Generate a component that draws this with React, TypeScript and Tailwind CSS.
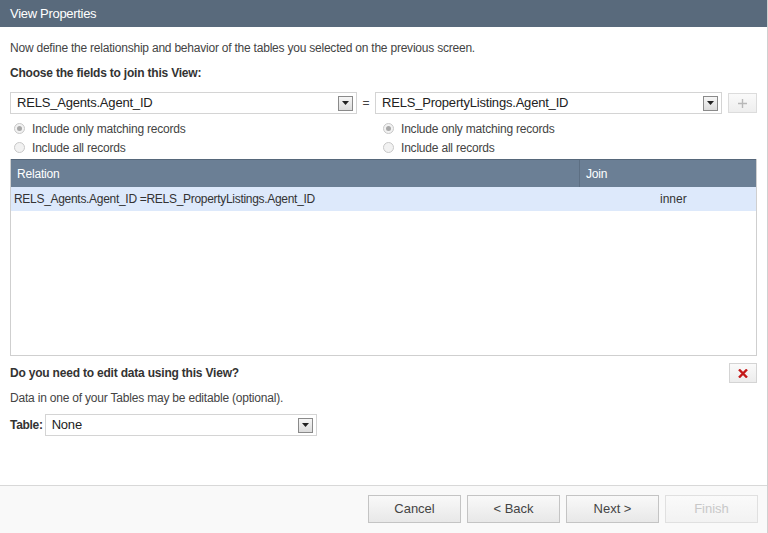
import React from 'react';

function Select({ value, className }: { value: string; className: string }) {
  return (
    <div className={`flex items-center justify-between h-[22px] bg-white border border-[#d4d4d4] pl-[6px] pr-[3px] ${className}`}>
      <span className="text-[13px] text-[#222] tracking-[-0.2px]">{value}</span>
      <div className="w-[15px] h-[15px] border border-[#8a8a8a] bg-gradient-to-b from-[#f6f6f6] to-[#dcdcdc] flex items-center justify-center">
        <svg width="7" height="4" viewBox="0 0 7 4"><path d="M0 0h7L3.5 4z" fill="#222" /></svg>
      </div>
    </div>
  );
}

function Radio({ checked, label }: { checked?: boolean; label: string }) {
  return (
    <div className="flex items-center h-[19px]">
      <div className="w-[11px] h-[11px] rounded-full border border-[#c8c8c8] bg-[#f2f2f2] flex items-center justify-center ml-[4px] mr-[7px]">
        {checked && <div className="w-[5px] h-[5px] rounded-full bg-[#a8a8a8]" />}
      </div>
      <span className="text-[12px] text-[#444] tracking-[-0.2px]">{label}</span>
    </div>
  );
}

function FooterButton({ label, disabled }: { label: string; disabled?: boolean }) {
  return (
    <button
      className={`w-[93px] h-[28px] border text-[13px] bg-gradient-to-b ${
        disabled
          ? 'border-[#e0e0e0] from-[#fafafa] to-[#f2f2f2] text-[#c8c8c8]'
          : 'border-[#c4c4c4] from-[#f9f9f9] to-[#e8e8e8] text-[#444]'
      }`}
    >
      {label}
    </button>
  );
}

export default function App() {
  return (
    <div className="w-[768px] h-[533px] bg-white flex flex-col font-['Liberation_Sans',Arial,sans-serif] border-r border-[#d0d0d0] overflow-hidden">
      <div className="h-[27px] bg-[#596a7c] flex items-center px-[10px] shrink-0">
        <span className="text-white text-[13px] tracking-[-0.3px]">View Properties</span>
      </div>

      <div className="flex-1 px-[10px]">
        <p className="text-[12px] text-[#444] mt-[14px] leading-[14px] tracking-[-0.22px]">
          Now define the relationship and behavior of the tables you selected on the previous screen.
        </p>
        <p className="text-[12px] text-[#333] font-bold mt-[11px] leading-[14px] tracking-[-0.2px]">Choose the fields to join this View:</p>

        <div className="flex items-center mt-[12px]">
          <Select value="RELS_Agents.Agent_ID" className="w-[348px]" />
          <span className="w-[18px] text-center text-[12px] text-[#444]">=</span>
          <Select value="RELS_PropertyListings.Agent_ID" className="w-[348px]" />
          <div className="ml-[6px] w-[29px] h-[20px] border border-[#dcdcdc] bg-gradient-to-b from-[#fafafa] to-[#eeeeee] flex items-center justify-center">
            <svg width="9" height="9" viewBox="0 0 9 9"><path d="M4.5 0v9M0 4.5h9" stroke="#b8b8b8" strokeWidth="1.4" /></svg>
          </div>
        </div>

        <div className="flex mt-[5px]">
          <div className="w-[369px] flex flex-col">
            <Radio checked label="Include only matching records" />
            <Radio label="Include all records" />
          </div>
          <div className="flex flex-col">
            <Radio checked label="Include only matching records" />
            <Radio label="Include all records" />
          </div>
        </div>

        <div className="mt-[2px] w-[747px] h-[197px] border border-[#cfcfcf] border-t-0">
          <div className="flex h-[28px] bg-[#6b7f95] text-[12px] text-white border-t border-[#56677a] tracking-[-0.2px]">
            <div className="w-[569px] flex items-center pl-[6px] border-r border-[#5d6f83]">Relation</div>
            <div className="flex-1 flex items-center pl-[6px]">Join</div>
          </div>
          <div className="flex h-[24px] bg-[#dde9fb] text-[12px] text-[#333] items-center">
            <div className="w-[570px] pl-[3px] tracking-[-0.3px]">RELS_Agents.Agent_ID =RELS_PropertyListings.Agent_ID</div>
            <div className="pl-[79px]">inner</div>
          </div>
        </div>

        <div className="flex items-center justify-between mt-[7px] h-[20px]">
          <p className="text-[12px] text-[#333] font-bold tracking-[-0.2px]">Do you need to edit data using this View?</p>
          <div className="w-[28px] h-[20px] border border-[#d4d4d4] bg-gradient-to-b from-[#fafafa] to-[#ececec] flex items-center justify-center">
            <svg width="10" height="9" viewBox="0 0 10 9"><path d="M1 0.5l8 8M9 0.5l-8 8" stroke="#c41a1a" strokeWidth="2.4" /></svg>
          </div>
        </div>

        <p className="text-[12px] text-[#444] mt-[8px] leading-[14px] tracking-[-0.2px]">Data in one of your Tables may be editable (optional).</p>

        <div className="flex items-center mt-[9px]">
          <span className="text-[12px] font-bold text-[#333] mr-[2px] tracking-[-0.3px]">Table:</span>
          <Select value="None" className="w-[272px]" />
        </div>
      </div>

      <div className="h-[48px] shrink-0 bg-[#f9f9f9] border-t border-[#d8d8d8] flex items-start justify-end gap-[6px] pt-[9px] pr-[9px]">
        <FooterButton label="Cancel" />
        <FooterButton label="< Back" />
        <FooterButton label="Next >" />
        <FooterButton label="Finish" disabled />
      </div>
    </div>
  );
}
